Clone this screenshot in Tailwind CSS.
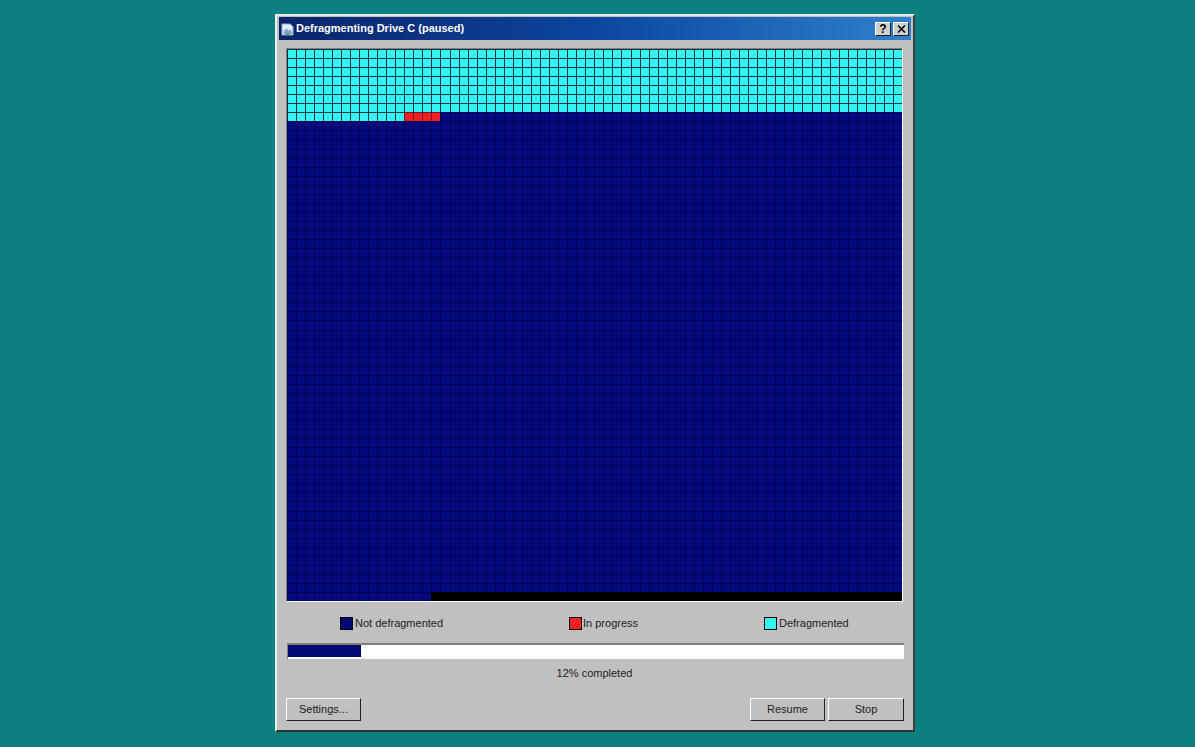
<!DOCTYPE html>
<html lang="en">
<head>
  <meta charset="UTF-8">
  <title>Defragmenting Drive C</title>
  <script src="https://cdn.jsdelivr.net/npm/@tailwindcss/browser@4"></script>
</head>
<body class="bg-[#0a8080] h-[747px] overflow-hidden pt-[14px] pl-[275px] font-['Liberation_Sans',Arial,sans-serif] text-[11px] text-[#222]">
  <!-- window -->
  <div class="w-[640px] h-[718px] bg-[#c0c0c0] border-t-2 border-l-2 border-t-[#e8e8e8] border-l-[#f0f0f0] border-r-2 border-b-2 border-r-[#404040] border-b-[#303030] p-[1px] flex flex-col">
    <!-- title bar -->
    <div class="h-[23px] shrink-0 mx-[1px] flex items-center pl-[2px] pr-[2px] bg-gradient-to-r from-[#0a246a] via-[#0c46a0] to-[#2f80cc]">
      <svg width="13" height="13" viewBox="0 0 14 14" class="shrink-0 mt-[1px]">
        <path d="M1 1h9l3 3v9H1z" fill="#e4ecf8" stroke="#8c9cc0" stroke-width="1"/>
        <path d="M3 9l3-3 2 2 2-1 2 3v2H3z" fill="#7fa8d0"/>
        <path d="M5 11h4v2H5z" fill="#58a070"/>
      </svg>
      <span class="ml-[2px] text-white font-bold text-[11px] whitespace-nowrap">Defragmenting Drive C (paused)</span>
      <div class="ml-auto flex gap-[2px]">
        <button class="w-[16px] h-[14px] bg-[#d0d0d0] border border-t-white border-l-white border-r-[#202020] border-b-[#202020] flex items-center justify-center text-[12px] font-bold leading-none text-black">?</button>
        <button class="w-[16px] h-[14px] bg-[#d0d0d0] border border-t-white border-l-white border-r-[#202020] border-b-[#202020] flex items-center justify-center">
          <svg width="9" height="8" viewBox="0 0 9 8"><path d="M1 0.5l7 7M8 0.5l-7 7" stroke="#000" stroke-width="1.5"/></svg>
        </button>
      </div>
    </div>

    <!-- content -->
    <div class="flex-1 flex flex-col pl-[8px] pr-[6px]">
      <!-- cluster map -->
      <div class="mt-[8px] w-[617px] h-[554px] shrink-0 border border-t-[#808080] border-l-[#808080] border-r-white border-b-white">
        <div id="map" class="ml-[-0.4px] w-[615.4px] h-[552px] bg-[#000000] grid grid-cols-[repeat(68,1fr)] grid-rows-[repeat(61,1fr)]"></div>
      </div>

      <!-- legend -->
      <div class="mt-[14px] h-[14px] relative flex">
        <div class="w-[277px] pl-[54px] flex items-center gap-[2px] shrink-0">
          <span class="w-[13px] h-[13px] bg-[#000a73] border border-black"></span>
          <span>Not defragmented</span>
        </div>
        <div class="w-[201px] pl-[6px] flex items-center gap-[1px] shrink-0">
          <span class="w-[13px] h-[13px] bg-[#ee2020] border border-black"></span>
          <span>In progress</span>
        </div>
        <div class="flex items-center gap-[2px] shrink-0">
          <span class="w-[13px] h-[13px] bg-[#33f3f3] border border-black"></span>
          <span>Defragmented</span>
        </div>
      </div>

      <!-- progress -->
      <div class="mt-[13px] ml-[1px] w-[617px] h-[16px] shrink-0 bg-white border-t-2 border-l border-t-[#808080] border-l-[#808080]">
        <div class="w-[73px] h-[12px] bg-[#000a73]"></div>
      </div>
      <div class="mt-[7px] text-center leading-[14px] w-[617px]">12% completed</div>

      <!-- buttons -->
      <div class="mt-[18px] flex w-[618px]">
        <button class="w-[75px] h-[23px] bg-[#c0c0c0] border border-t-white border-l-white border-r-[#202020] border-b-[#202020]">Settings...</button>
        <button class="ml-auto w-[75px] h-[23px] bg-[#c0c0c0] border border-t-white border-l-white border-r-[#202020] border-b-[#202020]">Resume</button>
        <button class="ml-[3px] w-[76px] h-[23px] bg-[#c0c0c0] border border-t-white border-l-white border-r-[#202020] border-b-[#202020]">Stop</button>
      </div>
    </div>
  </div>

  <script>
    // build the 68 x 61 cluster map
    const COLS = 68, ROWS = 61;
    const map = document.getElementById('map');
    let html = '';
    for (let r = 0; r < ROWS; r++) {
      for (let c = 0; c < COLS; c++) {
        const i = r * COLS + c;
        let cls = 'bg-[#000a7a] border-l border-t border-[#000050]';
        if (i < 7 * COLS + 13) cls = 'bg-[#33f3f3] border-l border-t border-[#06303a]';
        else if (i < 7 * COLS + 17) cls = 'bg-[#ee2020] border-l border-t border-[#7a1030]';
        else if (r === ROWS - 1 && c >= 16) cls = 'bg-black';
        html += '<div class="' + cls + '"></div>';
      }
    }
    map.innerHTML = html;
  </script>
</body>
</html>
